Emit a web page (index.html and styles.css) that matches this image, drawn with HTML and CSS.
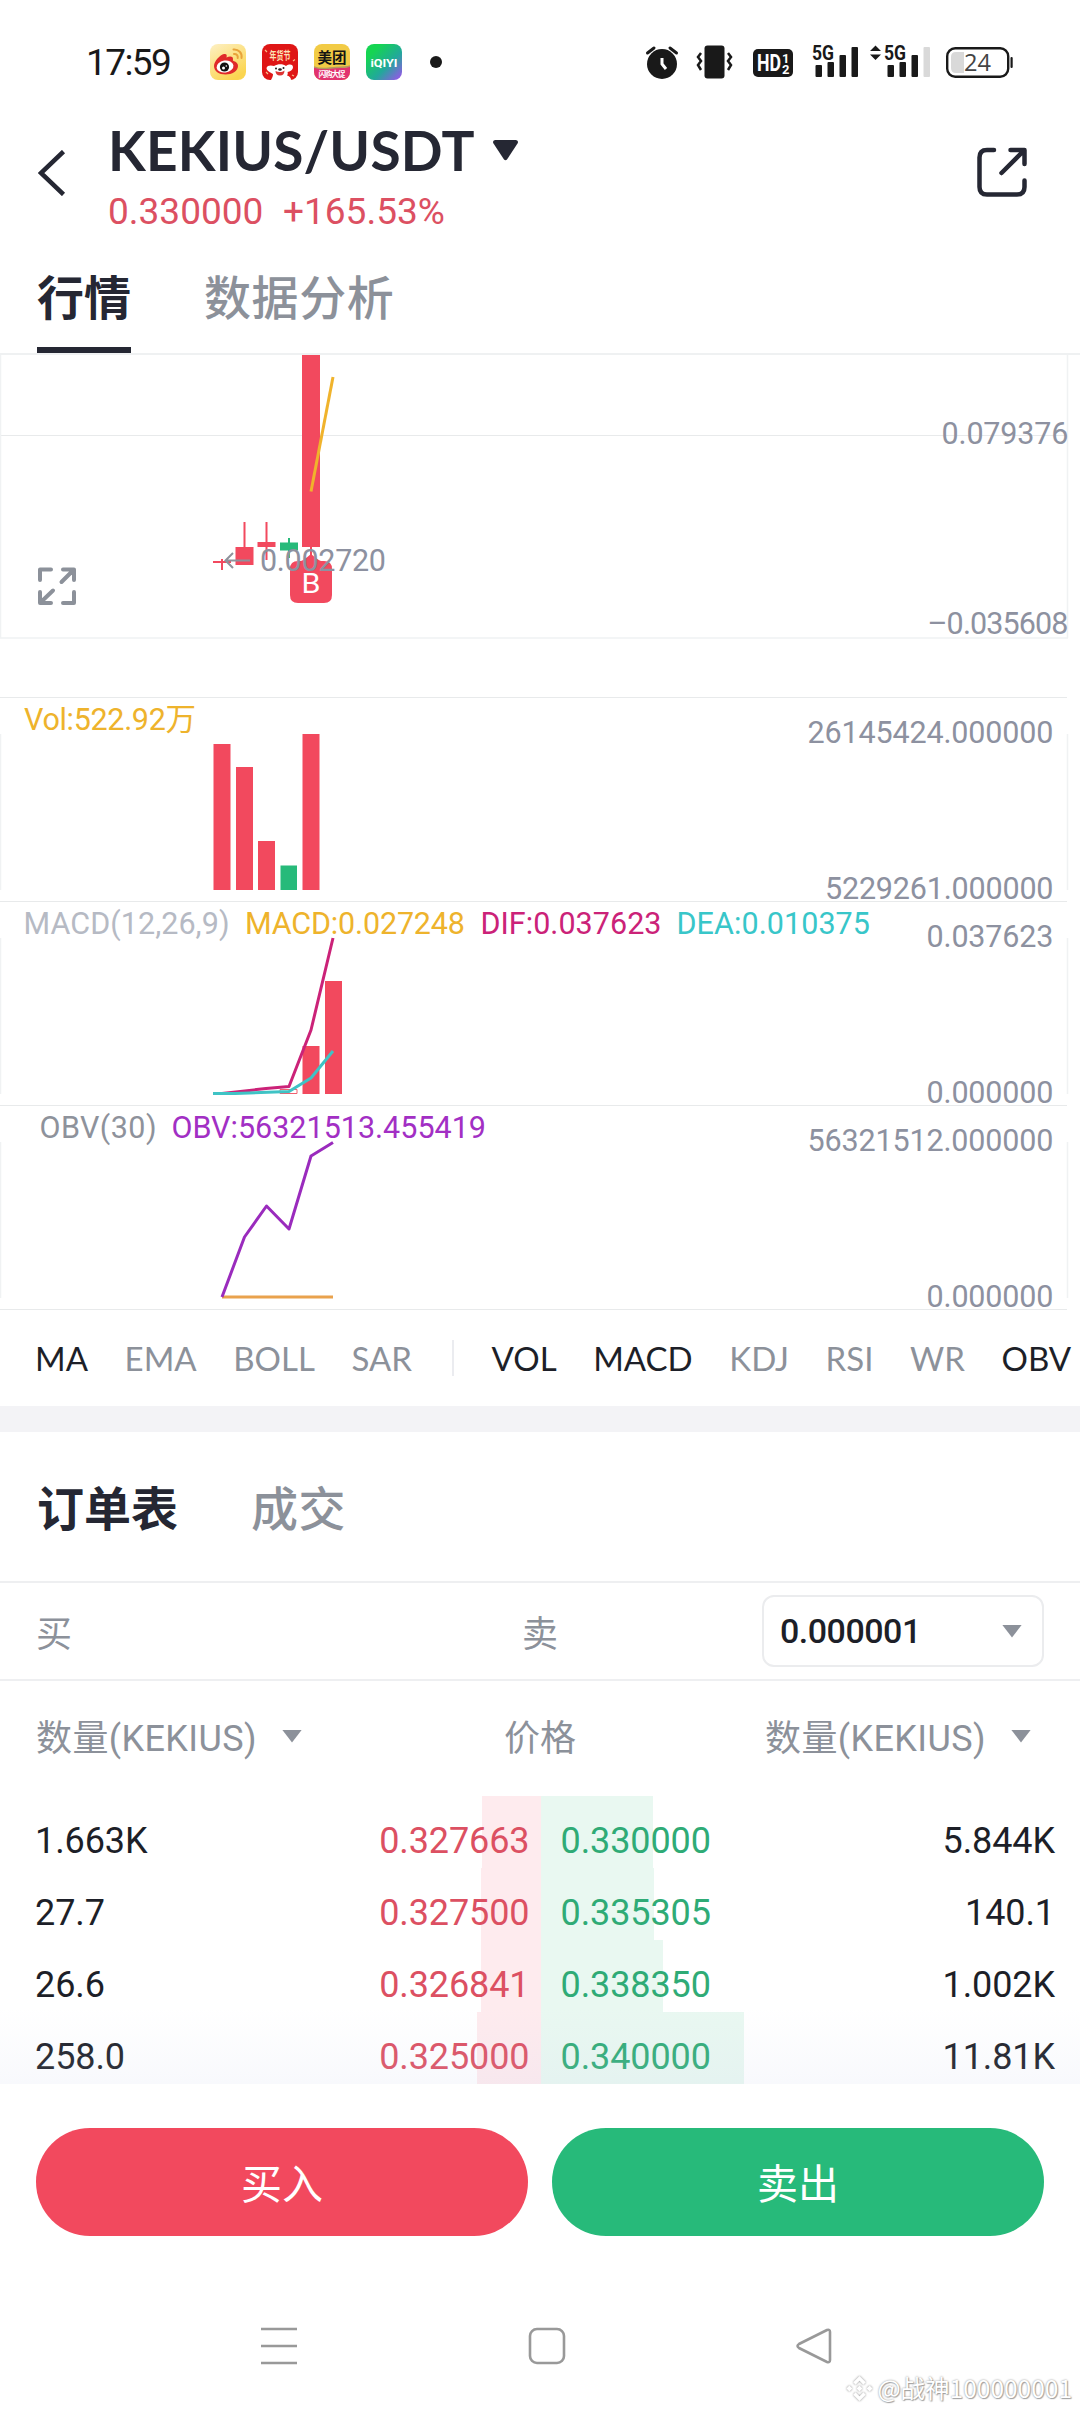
FILE: index.html
```html
<!DOCTYPE html>
<html lang="zh-CN">
<head>
<meta charset="utf-8">
<title>KEKIUS/USDT</title>
<link rel="stylesheet" href="styles.css">
</head>
<body>
<div class="screen">
  <div class="status">
    <span class="clock">17:59</span>
    <div class="apps">
      <svg class="app" viewBox="0 0 36 36">
        <defs><linearGradient id="wb" x1="0" y1="0" x2="0.6" y2="1"><stop offset="0" stop-color="#fdf0c4"/><stop offset="1" stop-color="#fbd550"/></linearGradient></defs>
        <rect width="36" height="36" rx="8" fill="url(#wb)"/>
        <path d="M4 22C4 17 10 11 14 10c3-.5 3 1.500 2.500 3.500 3-1.500 6.500-1.500 6.500 1.500 0 1-.5 1.500.5 2 3 1 4.500 2.500 4.500 5C28 27 22 30.500 15.500 30.500S4 27 4 22z" fill="#e02a2a"/>
        <ellipse cx="15" cy="22.500" rx="8.500" ry="6" fill="#fff" transform="rotate(-8 15 22.500)"/>
        <circle cx="14.500" cy="23" r="4.600" fill="#111"/><circle cx="13.500" cy="24" r="1.500" fill="#fff"/><circle cx="16.300" cy="22" r=".8" fill="#fff"/>
        <path d="M23.500 5.500c5-.5 9 3.500 8 8.500M24 10c2.500-.3 4.200 1.500 3.700 4" fill="none" stroke="#e8a33a" stroke-width="2" stroke-linecap="round"/>
      </svg>
      <svg class="app" viewBox="0 0 36 36">
        <rect width="36" height="36" rx="8" fill="#df1616"/>
        <text x="18" y="15.500" font-size="11" font-weight="700" text-anchor="middle" fill="#fbe3b8" textLength="21" lengthAdjust="spacingAndGlyphs">年货节</text>
        <path d="M9 36c1-2 2-3.500 2-6C8.500 28.500 4.500 27 4.500 24c.5-3 5-3 7.500-2 4-2.500 9-2.500 12 0 3-2 6.500-2 7 1 0 3-3 4.500-5.500 5 .5 1 .3 2.500-.5 3.500 2 .5 4 2 4 4.500z" fill="#fff"/>
        <path d="M13.500 27c3 1.500 6.500 1.500 9-.5 0 3-1.500 5-4.500 5s-4.500-2-4.500-4.500z" fill="#d33"/>
        <circle cx="14" cy="24.500" r="1" fill="#222"/><circle cx="21.500" cy="24" r="1" fill="#222"/><ellipse cx="18" cy="25.500" rx="1.800" ry="1.200" fill="#222"/>
        <path d="M3 6l2 2M31 17l2-1.500M4 28l2 2M30 31l2 1" stroke="#f7c08a" stroke-width="1.200"/>
      </svg>
      <svg class="app" viewBox="0 0 36 36">
        <defs><clipPath id="mtc"><rect width="36" height="36" rx="8"/></clipPath></defs>
        <g clip-path="url(#mtc)"><rect width="36" height="36" fill="#f2cb45"/>
        <path d="M0 23c8 3 16 1 22 1s10 0 14-2v14H0z" fill="#e2336f"/><path d="M0 23c8 3.500 16 .5 22 .5s10 0 14-1.500" fill="none" stroke="#b49a5e" stroke-width="1.500"/></g>
        <text x="18" y="19" font-size="14.500" font-weight="700" text-anchor="middle" fill="#141414">美团</text>
        <text x="18" y="33" font-size="7.500" font-weight="700" text-anchor="middle" fill="#fff" textLength="27">闪购大促</text>
      </svg>
      <svg class="app" viewBox="0 0 36 36">
        <defs><linearGradient id="iq" x1="0" y1="0" x2="1" y2="1"><stop offset="0.200" stop-color="#15d552"/><stop offset="0.600" stop-color="#21a99a"/><stop offset="1" stop-color="#a44cf2"/></linearGradient></defs>
        <rect width="36" height="36" rx="8" fill="url(#iq)"/>
        <text x="18" y="22.500" font-size="11.500" font-weight="700" text-anchor="middle" fill="#fff" textLength="27" lengthAdjust="spacingAndGlyphs">iQIYI</text>
      </svg>
      <i class="more-dot"></i>
    </div>
    <svg class="sysicons" viewBox="640 40 376 44" fill="#191919">
      <circle cx="662" cy="64" r="15"/><path d="M647.500 53l6.500-5M676.500 53l-6.500-5" stroke="#191919" stroke-width="3" stroke-linecap="round"/><path d="M662 58v6l4 5" fill="none" stroke="#fff" stroke-width="3"/>
      <rect x="704.500" y="45.500" width="20" height="33" rx="3"/><path d="M701 53l-3 4 3 4-3 4 3 5M728 53l3 4-3 4 3 4-3 5" fill="none" stroke="#191919" stroke-width="2.500"/>
      <rect x="753" y="49" width="40" height="28" rx="5"/>
      <text x="757" y="71" font-size="23" font-weight="700" fill="#fff" textLength="24" lengthAdjust="spacingAndGlyphs">HD</text>
      <text x="782" y="62.500" font-size="13" font-weight="700" fill="#fff">1</text><text x="782" y="74" font-size="13" font-weight="700" fill="#fff">2</text>
      <text x="812" y="60" font-size="20" font-weight="700" textLength="22" lengthAdjust="spacingAndGlyphs">5G</text>
      <rect x="815.500" y="65" width="6.500" height="12" rx="1"/><rect x="827.500" y="62" width="6.500" height="15" rx="1"/><rect x="839.500" y="55" width="6.500" height="22" rx="1"/><rect x="851.500" y="47" width="6.500" height="30" rx="1"/>
      <path d="M870 51l5.500-5.500L881 51zM870 54.500l5.500 5.500 5.500-5.500z"/>
      <text x="884" y="60" font-size="20" font-weight="700" textLength="22" lengthAdjust="spacingAndGlyphs">5G</text>
      <rect x="887.500" y="65" width="6.500" height="12" rx="1"/><rect x="899.500" y="62" width="6.500" height="15" rx="1"/><rect x="911.500" y="55" width="6.500" height="22" rx="1"/><rect x="923.500" y="47" width="6.500" height="30" rx="1" fill="#d9d9d9"/>
      <rect x="947.200" y="48.200" width="61" height="28.600" rx="8" fill="none" stroke="#191919" stroke-width="2.400"/><path d="M951 57q0-5 5-5h8v21h-8q-5 0-5-5z" fill="#d9d9d9"/><rect x="1010.500" y="57" width="2.200" height="11" rx="1"/>
      <text class="thin" x="964" y="71" font-size="23.500" fill="#444" textLength="27" lengthAdjust="spacingAndGlyphs">24</text>
    </svg>
  </div>

  <header class="header">
    <svg class="back" viewBox="0 0 28 46"><path d="M25.500 1.500L3 23l22.500 21.500" fill="none" stroke="#252733" stroke-width="4.500"/></svg>
    <div class="pair">
      <div class="pair-name"><h1>KEKIUS/USDT</h1>
        <svg class="caret-lg" viewBox="0 0 25 21"><path d="M2 0h21q3 1 1.500 3.500L14 19.500q-1.500 1.500-3 0L.5 3.500Q-1 1 2 0z" fill="#252733"/></svg></div>
      <div class="pair-price"><span class="last">0.330000</span><span class="change">+165.53%</span></div>
    </div>
    <svg class="share" viewBox="0 0 50 50" fill="none" stroke="#252733" stroke-width="4.500" stroke-linecap="round" stroke-linejoin="round"><path d="M17 3h-7q-7.500 0-7.500 7.500V40q0 7.500 7.500 7.500h30q7.500 0 7.500-7.500v-6.500M33.500 3H47.500V17M47 3.500L24.500 26"/></svg>
  </header>

  <nav class="tabs"><a class="tab active">行情</a><a class="tab">数据分析</a></nav>

  <svg class="chart" viewBox="0 355 1080 956">
    <g class="grid">
      <path d="M0 435.500H1067M0 697.500H1067M0 901.500H1067M0 1105.500H1067M0 1309.500H1067"/>
      <path d="M0 638H1068M.5 355V638M1067.500 355V638M.5 734V890M1067.500 734V890M.5 938V1094M1067.500 938V1094M.5 1142V1298M1067.500 1142V1298"/>
    </g>
    <g class="up">
      <rect x="302" y="355" width="18" height="192"/><rect x="310" y="547" width="2" height="12"/>
      <rect x="213" y="561" width="18" height="2"/><rect x="221" y="559" width="2" height="11"/>
      <rect x="235.500" y="547" width="18" height="18"/><rect x="243.500" y="522" width="2" height="26"/>
      <rect x="257.500" y="542" width="18" height="5"/><rect x="265.500" y="522" width="2" height="38"/>
      <path d="M311 554q7 6 10 7h3q8 0 8 8v26q0 8-8 8h-26q-8 0-8-8v-26q0-8 8-8h3q3-1 10-7z"/>
    </g>
    <g class="down"><rect x="280" y="542.500" width="18" height="8"/><rect x="288" y="538" width="2" height="20"/></g>
    <path class="ma" d="M311 491.500L333 377"/>
    <text x="301.500" y="593" font-size="28.500" font-weight="400" fill="#fff" textLength="19" lengthAdjust="spacingAndGlyphs">B</text>
    <path d="M250 560.500H226M233 553l-7.500 7.500 7.500 7.500" fill="none" stroke="#8e929b" stroke-width="2"/>
    <text class="axis" x="260" y="571" textLength="126">0.002720</text>
    <g fill="none" stroke="#8c919a" stroke-width="4" stroke-linecap="round" stroke-linejoin="round"><path d="M51 569.500H40V580M63 569.500H74V580M73 570.500L61.500 582M40 592V603H51M41 602L53 590.500M74 592V603H63"/></g>
    <text class="axis" x="941.500" y="444" textLength="127">0.079376</text>
    <text class="axis" x="927.500" y="634" textLength="141">–0.035608</text>

    <text class="ind gold" x="24" y="730" textLength="172">Vol:522.92万</text>
    <text class="axis" x="807.500" y="743" textLength="246">26145424.000000</text>
    <text class="axis" x="825" y="899" textLength="228.500">5229261.000000</text>
    <g class="up"><rect x="213.500" y="744" width="17" height="146"/><rect x="236" y="767" width="17" height="123"/><rect x="258" y="841" width="17" height="49"/><rect x="302.500" y="734" width="17" height="156"/></g>
    <rect class="down" x="280.500" y="865.500" width="16.500" height="24.500"/>

    <g class="up"><rect x="302.500" y="1046" width="17" height="48"/><rect x="325" y="981" width="17" height="113"/></g>
    <path d="M258 1092h17M280 1089.500h17v4h-17z" fill="none" stroke="#f0606f"/>
    <path class="line" d="M222 1093.500L266 1088.500 289 1086.500 311 1030 333 938" stroke="#cb2278"/>
    <path class="line" d="M213 1093.500H235L289 1091.500 311 1078 333 1051" stroke="#3fc3c5"/>
    <text class="ind" fill="#b6bac4" x="23.500" y="934" textLength="206">MACD(12,26,9)</text>
    <text class="ind gold" x="245" y="934" textLength="220">MACD:0.027248</text>
    <text class="ind" fill="#cb2278" x="480.500" y="934" textLength="181">DIF:0.037623</text>
    <text class="ind" fill="#38c6c9" x="676.500" y="934" textLength="193.500">DEA:0.010375</text>
    <text class="axis" x="926.500" y="947" textLength="127">0.037623</text>
    <text class="axis" x="926.500" y="1103" textLength="127">0.000000</text>

    <path class="line" d="M222 1297H333" stroke="#e9a24d"/>
    <path class="line" d="M222 1297L244.500 1237 266.500 1206 289 1229 311 1156 333 1142.500" stroke="#9a2bbd"/>
    <text class="ind" fill="#8e929b" x="39.500" y="1138" textLength="117">OBV(30)</text>
    <text class="ind" fill="#a22fc4" x="171.500" y="1138" textLength="314.500">OBV:56321513.455419</text>
    <text class="axis" x="807.500" y="1151" textLength="246">56321512.000000</text>
    <text class="axis" x="926.500" y="1307" textLength="127">0.000000</text>
  </svg>

  <div class="indicators">
    <span class="on">MA</span><span>EMA</span><span>BOLL</span><span>SAR</span><i class="sep"></i><span class="on">VOL</span><span class="on">MACD</span><span>KDJ</span><span>RSI</span><span>WR</span><span class="on">OBV</span>
  </div>

  <section class="book">
    <nav class="book-tabs"><a class="tab active">订单表</a><a class="tab">成交</a></nav>
    <div class="sides"><span>买</span><span>卖</span>
      <div class="select"><span>0.000001</span><i class="caret"></i></div></div>
    <div class="cols"><span class="col">数量(KEKIUS)<i class="caret"></i></span><span>价格</span><span class="col">数量(KEKIUS)<i class="caret"></i></span></div>
    <div class="rows">
      <div class="row"><div class="bid"><span class="depth" style="width:59px"></span><b>1.663K</b><b class="price">0.327663</b></div><div class="ask"><span class="depth" style="width:112px"></span><b class="price">0.330000</b><b>5.844K</b></div></div>
      <div class="row"><div class="bid"><span class="depth" style="width:60px"></span><b>27.7</b><b class="price">0.327500</b></div><div class="ask"><span class="depth" style="width:113px"></span><b class="price">0.335305</b><b>140.1</b></div></div>
      <div class="row"><div class="bid"><span class="depth" style="width:60px"></span><b>26.6</b><b class="price">0.326841</b></div><div class="ask"><span class="depth" style="width:122px"></span><b class="price">0.338350</b><b>1.002K</b></div></div>
      <div class="row"><div class="bid"><span class="depth" style="width:64px"></span><b>258.0</b><b class="price">0.325000</b></div><div class="ask"><span class="depth" style="width:203px"></span><b class="price">0.340000</b><b>11.81K</b></div></div>
    </div>
  </section>

  <div class="actions"><button class="buy">买入</button><button class="sell">卖出</button></div>

  <div class="navbar">
    <svg viewBox="0 0 38 38"><path d="M1 2H37M1 19H37M1 36H37"/></svg>
    <svg viewBox="0 0 38 38"><rect x="2" y="2" width="34" height="34" rx="7"/></svg>
    <svg viewBox="0 0 38 38"><path d="M32 3L4 17Q1 19 4 21L32 35Q35 36 35 33V5Q35 2 32 3Z"/></svg>
  </div>
  <div class="watermark">
    <svg viewBox="0 0 28 28"><path d="M14 1l6.500 6.500-2.500 2.500-4-4-4 4-2.500-2.500zM3.500 11l3 3-3 3-3-3zM24.500 11l3 3-3 3-3-3zM14 11l3 3-3 3-3-3zM7.500 20.500L10 18l4 4 4-4 2.500 2.500L14 27z"/></svg>
    <span>@战神100000001</span>
  </div>
</div>
</body>
</html>
```
FILE: styles.css
```css
* { box-sizing: border-box; }
body { margin: 0; background: #fff; font-family: Roboto, "Noto Sans CJK SC", sans-serif; color: #252733; }
.screen { position: relative; width: 1080px; height: 2412px; overflow: hidden; display: flex; flex-direction: column; background: #fff; }

.status { height: 110px; padding: 14px 64px 0 86px; display: flex; align-items: center; }
.clock { width: 124px; padding-top: 2px; font-size: 37px; line-height: 40px; color: #191919; letter-spacing: -1.6px; }
.apps { display: flex; align-items: center; gap: 16px; }
.app { width: 36px; height: 36px; }
.more-dot { width: 12px; height: 12px; margin-left: 12px; border-radius: 50%; background: #191919; }
.sysicons { width: 376px; height: 44px; margin-left: auto; }
.thin { font-family: "Open Sans", sans-serif; }

.header { height: 140px; padding: 0 53px 0 38px; display: flex; align-items: flex-start; }
.back { width: 28px; height: 46px; margin-top: 40px; }
.pair { margin-left: 42px; }
.pair-name { display: flex; align-items: center; gap: 18px; height: 80px; }
.pair-name h1 { margin: 0; width: 367px; font: 700 55px/80px Lato, sans-serif; letter-spacing: 0.2px; white-space: nowrap; }
.caret-lg { width: 25px; height: 21px; }
.pair-price { display: flex; gap: 20px; line-height: 44px; font-size: 37px; letter-spacing: 0; color: #dc5062; }
.last { width: 155px; }
.share { width: 50px; height: 50px; margin: 37px 0 0 auto; }

.tabs { height: 105px; padding: 0 37px; display: flex; gap: 73px; border-bottom: 2px solid #eff1f2; }
.tab { font-size: 47px; line-height: 97px; font-weight: 500; color: #8c919a; }
.tab + .tab { letter-spacing: 0.6px; }
.tab.active { font-weight: 700; color: #252733; }
.tabs .tab { height: 104px; }
.tabs .active { border-bottom: 6px solid #252733; height: 103px; }

.chart { display: block; width: 1080px; height: 956px; flex: none; }
.grid path { fill: none; stroke: #e8eaeb; stroke-width: 1; }
.grid path + path { stroke: #f0f2f3; stroke-width: 1.5; }
.up { fill: #f2495e; }
.down { fill: #27ba7a; }
.ma { fill: none; stroke: #f0b32c; stroke-width: 3; }
.line { fill: none; stroke-width: 3; stroke-linejoin: round; }
.axis { font-size: 30.5px; fill: #8d91a0; }
.ind { font-size: 30.5px; }
.gold { fill: #eeb32c; }

.indicators { height: 95px; padding: 0 0 2px 35px; display: flex; align-items: center; font: 400 33px Lato, sans-serif; letter-spacing: 0; color: #8c919a; white-space: nowrap; }
.indicators span { flex: none; margin-right: 36.6px; }
.indicators .on { color: #1d1f28; }
.sep { flex: none; width: 2px; height: 36px; margin: 0 38px 0 3px; background: #ebecf0; }

.book { height: 679px; border-top: 26px solid #f3f3f6; }
.book-tabs { height: 151px; padding: 6px 37px 0; display: flex; align-items: center; gap: 73px; border-bottom: 2px solid #eeeff1; }
.sides { height: 98px; padding: 0 36px; display: grid; grid-template-columns: 1fr 36px 1fr; align-items: center; font-size: 36px; color: #8c919a; border-bottom: 2px solid #eeeff1; }
.select { justify-self: end; width: 282px; height: 72px; padding: 0 20px 0 16px; display: flex; align-items: center; justify-content: space-between; border: 2px solid #ebecee; border-radius: 12px; font-size: 34px; font-weight: 500; letter-spacing: -0.5px; color: #1d1f28; }
.caret { width: 20px; height: 13px; background: #8c919a; clip-path: polygon(0 0, 100% 0, 50% 100%); }
.cols { height: 115px; padding: 0 49px 8px 36px; display: grid; grid-template-columns: 468px 1fr auto; align-items: center; font-size: 36px; color: #8c919a; }
.col { display: flex; align-items: center; gap: 25px; letter-spacing: 0.4px; }
.col .caret { margin-top: 3px; }
.rows { position: relative; height: 288px; overflow: hidden; }
.rows::after { content: ""; position: absolute; left: 0; right: 0; bottom: 0; height: 76px; background: linear-gradient(rgba(200, 208, 235, 0), rgba(200, 208, 235, 0.13)); }
.row { display: flex; height: 72px; }
.bid, .ask { position: relative; flex: 1; display: flex; align-items: center; justify-content: space-between; font-size: 36px; letter-spacing: -0.1px; }
.bid { padding: 18px 11px 0 35px; }
.ask { padding: 18px 25px 0 20px; }
.row b { position: relative; font-weight: 400; color: #1d1f28; }
.bid .price { color: #dc5062; }
.ask .price { color: #2fab76; }
.depth { position: absolute; top: 0; bottom: 0; }
.bid .depth { right: 0; background: #feebee; }
.ask .depth { left: 0; background: #e9f8f1; }

.actions { height: 196px; padding: 43px 36px 0; display: flex; gap: 24px; align-items: flex-start; }
.actions button { flex: 1; height: 108px; border: 0; border-radius: 54px; padding: 0 0 2px; font: 400 41px "Noto Sans CJK SC", sans-serif; color: #fff; }
.buy { background: #f2495e; }
.sell { background: #27ba7a; }

.navbar { padding: 46px 247px 0 260px; display: flex; justify-content: space-between; }
.navbar svg { width: 38px; height: 38px; fill: none; stroke: #999; stroke-width: 2.6; }
.watermark { position: absolute; right: 8px; bottom: 8px; display: flex; align-items: center; gap: 4px; font: 400 24.5px/32px "Noto Sans CJK SC", sans-serif; color: #fff; text-shadow: 0 0 2px #888, 1px 1px 1px #aaa; }
.watermark svg { width: 27px; height: 27px; fill: #fff; filter: drop-shadow(0 0 1px #888); }
```
